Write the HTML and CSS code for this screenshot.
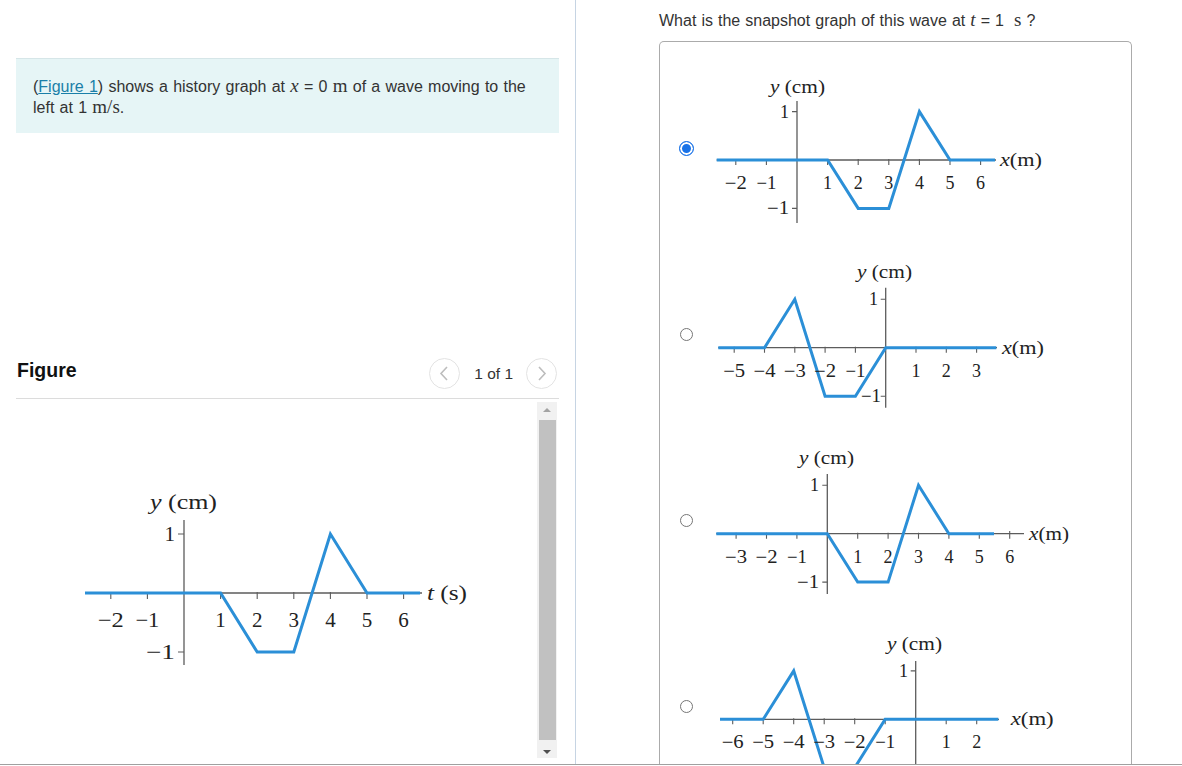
FILE: index.html
```html
<!DOCTYPE html>
<html>
<head>
<meta charset="utf-8">
<link rel="stylesheet" href="styles.css">
</head>
<body>
<div class="page">
  <div class="left">
    <div class="info">(<a class="fig-link" href="#">Figure 1</a>) shows a history graph at <span class="mi">x</span> = 0 <span class="mr">m</span> of a wave moving to the left at 1 <span class="mr">m/s</span>.</div>

    <div class="fig-head">
      <div class="fig-title">Figure</div>
      <div class="pager">
        <span class="navbtn"><svg width="31" height="31" viewBox="0 0 31 31"><polyline points="18,9 12,15.5 18,22" class="chev"/></svg></span>
        <span class="count">1 of 1</span>
        <span class="navbtn"><svg width="31" height="31" viewBox="0 0 31 31"><polyline points="13,9 19,15.5 13,22" class="chev"/></svg></span>
      </div>
    </div>

    <div class="fig-body">
      <div class="fig-canvas">
        <svg class="graph g-main" width="400" height="190" viewBox="0 0 400 190">
          <path class="ax" d="M11 113 H348 M110 40 V185"/>
          <path class="tick" d="M36.8 112 v7 M73.4 112 v7 M146.6 112 v7 M183.2 112 v7 M219.8 112 v7 M256.4 112 v7 M293 112 v7 M329.6 112 v7 M104 54 H110 M104 172 H110"/>
          <polyline class="wave" points="11,113 146.6,113 183.2,172 219.8,172 256.4,54 293,113 346,113"/>
          <text x="101" y="61" text-anchor="end">1</text>
          <text x="101" y="179" text-anchor="end" textLength="29" lengthAdjust="spacingAndGlyphs">−1</text>
          <text x="36.8" y="147" text-anchor="middle" textLength="26" lengthAdjust="spacingAndGlyphs">−2</text>
          <text x="73.4" y="147" text-anchor="middle" textLength="24" lengthAdjust="spacingAndGlyphs">−1</text>
          <text x="146.6" y="147" text-anchor="middle">1</text>
          <text x="183.2" y="147" text-anchor="middle">2</text>
          <text x="219.8" y="147" text-anchor="middle">3</text>
          <text x="256.4" y="147" text-anchor="middle">4</text>
          <text x="293" y="147" text-anchor="middle">5</text>
          <text x="329.6" y="147" text-anchor="middle">6</text>
          <text class="axlbl" x="76" y="29" textLength="67" lengthAdjust="spacingAndGlyphs"><tspan class="it">y</tspan> (cm)</text>
          <text class="axlbl" x="353" y="120" textLength="40" lengthAdjust="spacingAndGlyphs"><tspan class="it">t</tspan> (s)</text>
        </svg>
      </div>
      <div class="scrollbar">
        <div class="sb-up"></div>
        <div class="sb-thumb"></div>
        <div class="sb-down"></div>
      </div>
    </div>
  </div>

  <div class="right">
    <div class="question">What is the snapshot graph of this wave at <span class="mi">t</span> = 1 &nbsp;<span class="mr">s</span> ?</div>
    <div class="options">

      <div class="option">
        <span class="radio checked"></span>
        <svg class="graph g-opt" width="400" height="186" viewBox="0 0 400 186">
          <path class="ax" d="M16.7 117 H296 M97 58 V180"/>
          <path class="tick" d="M35.8 116 v6 M66.4 116 v6 M127.6 116 v6 M158.2 116 v6 M188.8 116 v6 M219.4 116 v6 M250 116 v6 M280.6 116 v6 M92 68.6 H97 M92 165.4 H97"/>
          <polyline class="wave" points="16.7,117 127.6,117 158.2,165.4 188.8,165.4 219.4,68.6 250,117 295,117"/>
          <text x="89" y="74.6" text-anchor="end">1</text>
          <text x="89" y="171.4" text-anchor="end" textLength="22" lengthAdjust="spacingAndGlyphs">−1</text>
          <text x="35.8" y="146" text-anchor="middle" textLength="22" lengthAdjust="spacingAndGlyphs">−2</text>
          <text x="66.4" y="146" text-anchor="middle" textLength="20" lengthAdjust="spacingAndGlyphs">−1</text>
          <text x="127.6" y="146" text-anchor="middle">1</text>
          <text x="158.2" y="146" text-anchor="middle">2</text>
          <text x="188.8" y="146" text-anchor="middle">3</text>
          <text x="219.4" y="146" text-anchor="middle">4</text>
          <text x="250" y="146" text-anchor="middle">5</text>
          <text x="280.6" y="146" text-anchor="middle">6</text>
          <text class="axlbl" x="70" y="50" textLength="55" lengthAdjust="spacingAndGlyphs"><tspan class="it">y</tspan> (cm)</text>
          <text class="axlbl" x="300" y="123" textLength="42" lengthAdjust="spacingAndGlyphs"><tspan class="it">x</tspan>(m)</text>
        </svg>
      </div>

      <div class="option">
        <span class="radio"></span>
        <svg class="graph g-opt" width="400" height="186" viewBox="0 0 400 186">
          <path class="ax" d="M19.3 118.7 H298 M186.7 58.7 V178.7"/>
          <path class="tick" d="M35.2 117.7 v6 M65.5 117.7 v6 M95.8 117.7 v6 M126.1 117.7 v6 M156.4 117.7 v6 M217 117.7 v6 M247.3 117.7 v6 M277.6 117.7 v6 M181.7 70.2 H186.7 M181.7 167.2 H186.7"/>
          <polyline class="wave" points="19.3,118.7 65.5,118.7 95.8,70.2 126.1,167.2 156.4,167.2 186.7,118.7 297.3,118.7"/>
          <text x="179" y="76.2" text-anchor="end">1</text>
          <text x="182" y="173.2" text-anchor="end" textLength="20" lengthAdjust="spacingAndGlyphs">−1</text>
          <text x="35.2" y="147.7" text-anchor="middle" textLength="22" lengthAdjust="spacingAndGlyphs">−5</text>
          <text x="65.5" y="147.7" text-anchor="middle" textLength="22" lengthAdjust="spacingAndGlyphs">−4</text>
          <text x="95.8" y="147.7" text-anchor="middle" textLength="22" lengthAdjust="spacingAndGlyphs">−3</text>
          <text x="126.1" y="147.7" text-anchor="middle" textLength="22" lengthAdjust="spacingAndGlyphs">−2</text>
          <text x="156.4" y="147.7" text-anchor="middle" textLength="20" lengthAdjust="spacingAndGlyphs">−1</text>
          <text x="217" y="147.7" text-anchor="middle">1</text>
          <text x="247.3" y="147.7" text-anchor="middle">2</text>
          <text x="277.6" y="147.7" text-anchor="middle">3</text>
          <text class="axlbl" x="158" y="49" textLength="55" lengthAdjust="spacingAndGlyphs"><tspan class="it">y</tspan> (cm)</text>
          <text class="axlbl" x="303" y="124.7" textLength="42" lengthAdjust="spacingAndGlyphs"><tspan class="it">x</tspan>(m)</text>
        </svg>
      </div>

      <div class="option">
        <span class="radio"></span>
        <svg class="graph g-opt" width="400" height="186" viewBox="0 0 400 186">
          <path class="ax" d="M17.3 118.7 H325 M128.3 59 V179"/>
          <path class="tick" d="M37.1 117.7 v6 M67.5 117.7 v6 M97.9 117.7 v6 M158.7 117.7 v6 M189.1 117.7 v6 M219.5 117.7 v6 M249.9 117.7 v6 M280.3 117.7 v6 M310.7 116 v7.7 M123.3 70.3 H128.3 M123.3 167.1 H128.3"/>
          <polyline class="wave" points="17.3,118.7 128.3,118.7 158.7,167.1 189.1,167.1 219.5,70.3 249.9,118.7 295,118.7"/>
          <text x="120" y="76.3" text-anchor="end">1</text>
          <text x="120" y="173.1" text-anchor="end" textLength="22" lengthAdjust="spacingAndGlyphs">−1</text>
          <text x="37.1" y="147.7" text-anchor="middle" textLength="22" lengthAdjust="spacingAndGlyphs">−3</text>
          <text x="67.5" y="147.7" text-anchor="middle" textLength="22" lengthAdjust="spacingAndGlyphs">−2</text>
          <text x="97.9" y="147.7" text-anchor="middle" textLength="20" lengthAdjust="spacingAndGlyphs">−1</text>
          <text x="158.7" y="147.7" text-anchor="middle">1</text>
          <text x="189.1" y="147.7" text-anchor="middle">2</text>
          <text x="219.5" y="147.7" text-anchor="middle">3</text>
          <text x="249.9" y="147.7" text-anchor="middle">4</text>
          <text x="280.3" y="147.7" text-anchor="middle">5</text>
          <text x="310.7" y="147.7" text-anchor="middle">6</text>
          <text class="axlbl" x="100" y="48.7" textLength="55" lengthAdjust="spacingAndGlyphs"><tspan class="it">y</tspan> (cm)</text>
          <text class="axlbl" x="330" y="124.7" textLength="40" lengthAdjust="spacingAndGlyphs"><tspan class="it">x</tspan>(m)</text>
        </svg>
      </div>

      <div class="option">
        <span class="radio"></span>
        <svg class="graph g-opt" width="400" height="186" viewBox="0 0 400 186">
          <path class="ax" d="M21 118.3 H300 M216.7 60 V180"/>
          <path class="tick" d="M33.7 117.3 v6 M64.2 117.3 v6 M94.7 117.3 v6 M125.2 117.3 v6 M155.7 117.3 v6 M186.2 117.3 v6 M247.2 117.3 v6 M277.7 117.3 v6 M211.7 69.9 H216.7 M211.7 166.7 H216.7"/>
          <polyline class="wave" points="21,118.3 64.2,118.3 94.7,69.9 125.2,166.7 155.7,166.7 186.2,118.3 299.3,118.3"/>
          <text x="209" y="75.9" text-anchor="end">1</text>
          <text x="33.7" y="147.3" text-anchor="middle" textLength="22" lengthAdjust="spacingAndGlyphs">−6</text>
          <text x="64.2" y="147.3" text-anchor="middle" textLength="22" lengthAdjust="spacingAndGlyphs">−5</text>
          <text x="94.7" y="147.3" text-anchor="middle" textLength="22" lengthAdjust="spacingAndGlyphs">−4</text>
          <text x="125.2" y="147.3" text-anchor="middle" textLength="22" lengthAdjust="spacingAndGlyphs">−3</text>
          <text x="155.7" y="147.3" text-anchor="middle" textLength="22" lengthAdjust="spacingAndGlyphs">−2</text>
          <text x="186.2" y="147.3" text-anchor="middle" textLength="20" lengthAdjust="spacingAndGlyphs">−1</text>
          <text x="247.2" y="147.3" text-anchor="middle">1</text>
          <text x="277.7" y="147.3" text-anchor="middle">2</text>
          <text class="axlbl" x="188" y="48.7" textLength="55" lengthAdjust="spacingAndGlyphs"><tspan class="it">y</tspan> (cm)</text>
          <text class="axlbl" x="311.7" y="124.3" textLength="43" lengthAdjust="spacingAndGlyphs"><tspan class="it">x</tspan>(m)</text>
        </svg>
      </div>

    </div>
  </div>
</div>
</body>
</html>
```

FILE: styles.css
```css
html, body {
  margin: 0;
  padding: 0;
  background: #fff;
}

body {
  font-family: "Liberation Sans", Arial, sans-serif;
  color: #333;
  overflow: hidden;
}

.page {
  display: flex;
  height: 765px;
  box-sizing: border-box;
  border-bottom: 1px solid #a0a0a0;
  overflow: hidden;
}

/* ---------- left column ---------- */
.left {
  width: 576px;
  flex: none;
  box-sizing: border-box;
  padding: 0 16px;
  border-right: 1px solid #c6d4e3;
}

.info {
  margin-top: 58px;
  height: 75px;
  box-sizing: border-box;
  padding: 17px 17px 0 17px;
  background: #e6f5f6;
  border-top: 1px solid #d6e6e8;
  font-size: 16px;
  word-spacing: 0.8px;
  line-height: 20px;
  color: #333;
}

.fig-link {
  color: #1a7fa8;
  text-decoration: underline;
}

.mi {
  font-family: "Liberation Serif", "Times New Roman", serif;
  font-style: italic;
  font-size: 19px;
  line-height: 1;
}

.mr {
  font-family: "Liberation Serif", "Times New Roman", serif;
  font-size: 19px;
  line-height: 1;
}

.fig-head {
  margin-top: 217px;
  height: 49px;
  box-sizing: border-box;
  padding-bottom: 4px;
  border-bottom: 1px solid #dcdcdc;
  display: flex;
  align-items: center;
  justify-content: space-between;
}

.fig-title {
  font-size: 19.5px;
  font-weight: bold;
  color: #111;
  margin: 0 0 3px 1px;
}

.pager {
  display: flex;
  align-items: center;
  margin: 3px 2px 0 0;
}

.navbtn {
  width: 31px;
  height: 31px;
  box-sizing: border-box;
  border: 1px solid #e3e3e3;
  border-radius: 50%;
  display: flex;
  align-items: center;
  justify-content: center;
  overflow: hidden;
}

.navbtn svg {
  display: block;
  flex: none;
}

.chev {
  fill: none;
  stroke: #bdbdbd;
  stroke-width: 1.6;
}

.count {
  font-size: 15.5px;
  color: #333;
  margin: 0 13px 0 14px;
}

.fig-body {
  display: flex;
  height: 360px;
}

.fig-canvas {
  flex: 1;
}

.g-main {
  display: block;
  margin-left: 58px;
  margin-top: 81px;
}

.scrollbar {
  width: 20px;
  height: 356px;
  margin: 3px 2px 0 0;
  background: #f1f1f1;
  display: flex;
  flex-direction: column;
  align-items: center;
}

.sb-up {
  margin-top: 6px;
  width: 0;
  height: 0;
  border-left: 4px solid transparent;
  border-right: 4px solid transparent;
  border-bottom: 4px solid #a3a3a3;
}

.sb-thumb {
  margin-top: 8px;
  width: 17px;
  height: 320px;
  background: #c1c1c1;
}

.sb-down {
  margin-top: 10px;
  width: 0;
  height: 0;
  border-left: 4px solid transparent;
  border-right: 4px solid transparent;
  border-top: 4px solid #505050;
}

/* ---------- right column ---------- */
.right {
  flex: 1;
  padding-left: 83px;
}

.question {
  padding-top: 10px;
  font-size: 16px;
  word-spacing: 0.6px;
  line-height: 20px;
  color: #333;
}

.options {
  margin-top: 10px;
  width: 473px;
  height: 900px;
  box-sizing: border-box;
  border: 1px solid #ababab;
  border-bottom: none;
  border-radius: 5px 5px 0 0;
}

.option {
  display: flex;
  align-items: flex-start;
  height: 186px;
}

.option:first-child {
  margin-top: 1px;
}

.radio {
  flex: none;
  width: 13px;
  height: 13px;
  margin: 99px 0 0 20px;
  box-sizing: border-box;
  border: 1px solid #767676;
  border-radius: 50%;
  background: #fff;
}

.radio.checked {
  width: 15px;
  height: 15px;
  margin-top: 98px;
  margin-left: 19px;
  border: 1.5px solid #1a73e8;
  background: #1a73e8;
  box-shadow: inset 0 0 0 2px #fff;
}

.g-opt {
  display: block;
  flex: none;
  margin-left: 6px;
}

/* ---------- graph drawing ---------- */
.graph text {
  font-family: "Liberation Serif", "Times New Roman", serif;
  fill: #222;
}

.g-main text {
  font-size: 21px;
}

.g-main .axlbl {
  font-size: 22px;
}

.g-opt text {
  font-size: 18px;
}

.g-opt .axlbl {
  font-size: 18.5px;
}

.graph .it {
  font-style: italic;
}

.ax {
  fill: none;
  stroke: #5c5c5c;
  stroke-width: 1.3;
}

.tick {
  fill: none;
  stroke: #5c5c5c;
  stroke-width: 1.1;
}

.wave {
  fill: none;
  stroke: #2b8fd7;
  stroke-width: 3;
  stroke-linejoin: miter;
}
```
